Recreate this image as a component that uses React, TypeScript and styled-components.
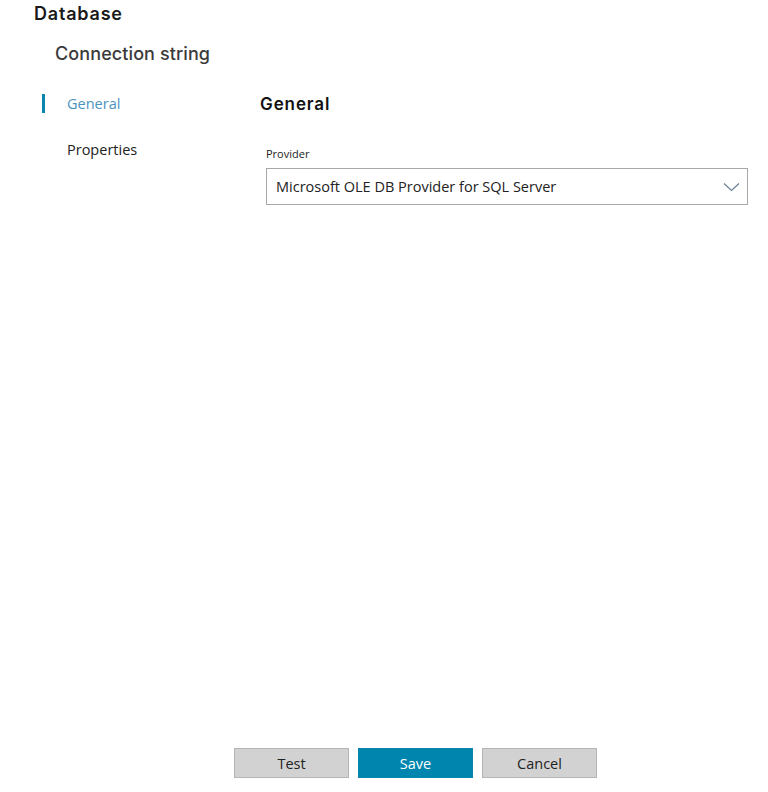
import React from "react";
import styled, { createGlobalStyle } from "styled-components";

const Global = createGlobalStyle`
  html, body { margin: 0; padding: 0; background: #ffffff; }
  body { font-family: "Open Sans", "Noto Sans", sans-serif; color: #222; }
  * { box-sizing: border-box; }
`;

const Page = styled.div`
  height: 792px;
  display: flex;
  flex-direction: column;
`;

const Title = styled.h1`
  margin: 0;
  padding: 2px 0 0 34px;
  font-family: "Inter", "Noto Sans", sans-serif;
  font-weight: 600;
  font-size: 18px;
  letter-spacing: 0.8px;
  line-height: 24px;
  color: #1a1a1a;
`;

const Subtitle = styled.h2`
  margin: 0;
  padding: 16px 0 0 55px;
  font-family: "Inter", "Noto Sans", sans-serif;
  font-weight: 500;
  font-size: 18px;
  letter-spacing: 0.1px;
  line-height: 24px;
  color: #3a3a3a;
`;

const Body = styled.div`
  flex: 1;
  display: grid;
  grid-template-columns: 218px 1fr;
  padding: 28px 20px 0 42px;
`;

const Nav = styled.nav`
  display: flex;
  flex-direction: column;
  gap: 27px;
`;

const NavItem = styled.div<{ $active?: boolean }>`
  display: flex;
  align-items: center;
  height: 19px;
  padding-left: 22px;
  border-left: 3px solid ${(p) => (p.$active ? "#0a85ad" : "transparent")};
  font-size: 14.5px;
  color: ${(p) => (p.$active ? "#4b93bd" : "#222")};
`;

const Content = styled.section`
  display: flex;
  flex-direction: column;
`;

const SectionTitle = styled.h3`
  margin: 0;
  font-family: "Inter", "Noto Sans", sans-serif;
  font-weight: 600;
  font-size: 17px;
  letter-spacing: 0.9px;
  line-height: 20px;
  color: #111;
`;

const Field = styled.div`
  display: flex;
  flex-direction: column;
  padding: 32px 0 0 6px;
`;

const Label = styled.label`
  font-size: 11px;
  line-height: 15px;
  color: #222;
  margin-bottom: 7px;
`;

const Select = styled.div`
  height: 37px;
  width: 482px;
  border: 1px solid #a8a8a8;
  display: flex;
  align-items: center;
  justify-content: space-between;
  padding: 0 7px 0 9px;
  font-size: 14.5px;
  color: #222;
`;

const Footer = styled.footer`
  display: flex;
  justify-content: center;
  gap: 9px;
  padding: 0 0 14px 63px;
`;

const Button = styled.button<{ $primary?: boolean }>`
  width: 115px;
  height: 30px;
  font-family: "Open Sans", "Noto Sans", sans-serif;
  font-size: 14.5px;
  border: 1px solid ${(p) => (p.$primary ? "#0a85ad" : "#b5b5b5")};
  background: ${(p) => (p.$primary ? "#0085ae" : "#d2d2d2")};
  color: ${(p) => (p.$primary ? "#ffffff" : "#222")};
  cursor: pointer;
`;

const Chevron = () => (
  <svg width="17" height="10" viewBox="0 0 17 10" fill="none">
    <path d="M1 1.5 L8.5 8.5 L16 1.5" stroke="#6a7f95" strokeWidth="1.2" />
  </svg>
);

export default function App() {
  return (
    <Page>
      <Global />
      <Title>Database</Title>
      <Subtitle>Connection string</Subtitle>
      <Body>
        <Nav>
          <NavItem $active>General</NavItem>
          <NavItem>Properties</NavItem>
        </Nav>
        <Content>
          <SectionTitle>General</SectionTitle>
          <Field>
            <Label>Provider</Label>
            <Select>
              <span>Microsoft OLE DB Provider for SQL Server</span>
              <Chevron />
            </Select>
          </Field>
        </Content>
      </Body>
      <Footer>
        <Button>Test</Button>
        <Button $primary>Save</Button>
        <Button>Cancel</Button>
      </Footer>
    </Page>
  );
}
